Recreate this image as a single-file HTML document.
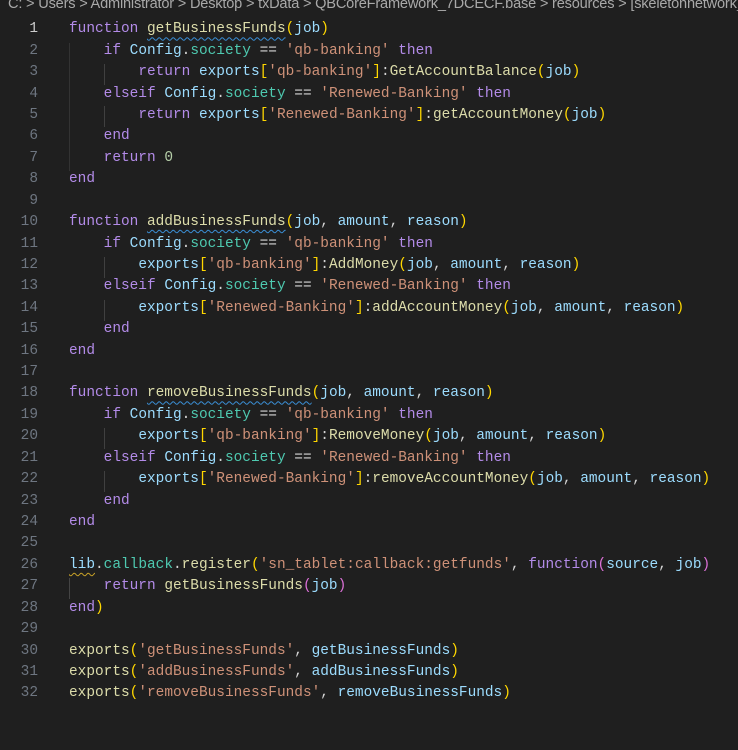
<!DOCTYPE html>
<html><head><meta charset="utf-8"><style>
html,body{margin:0;padding:0;background:#1f1f1f;width:738px;height:750px;overflow:hidden}
.bc{position:absolute;left:8px;top:-4px;font:14.6px "Liberation Sans",sans-serif;color:#a9a9a9;white-space:nowrap;letter-spacing:-0.2px}
.l{position:absolute;left:0;height:21.4px;line-height:21.4px;font:14.45px "Liberation Mono",monospace;white-space:pre;color:#d4d4d4}
.n{position:absolute;width:38px;text-align:right;color:#6e7681}
.n.a{color:#cccccc}
.c{position:absolute;left:69px}
.k{color:#b38be8}.f{color:#dcdcaa}.v{color:#9cdcfe}.p{color:#4ec9b0}.s{color:#ce9178}.num{color:#b5cea8}
.y{color:#ffd700}.m{color:#da70d6}.b{color:#179fff}
.w{text-decoration:underline wavy #3a8fd6;text-underline-offset:4px;text-decoration-thickness:1px}
.wy{text-decoration:underline wavy #c9a227;text-underline-offset:4px;text-decoration-thickness:1px}
.g{position:absolute;width:1px;background:#404040}
</style></head><body>
<div class="bc">C: &gt; Users &gt; Administrator &gt; Desktop &gt; txData &gt; QBCoreFramework_7DCECF.base &gt; resources &gt; [skeletonnetwork]</div>
<div class="g" style="left:104px;top:64px;height:21px"></div>
<div class="g" style="left:104px;top:106px;height:21px"></div>
<div class="g" style="left:104px;top:257px;height:21px"></div>
<div class="g" style="left:104px;top:300px;height:21px"></div>
<div class="g" style="left:104px;top:428px;height:21px"></div>
<div class="g" style="left:104px;top:471px;height:21px"></div>
<div class="g" style="left:69px;top:43px;height:128px;background:#333"></div>
<div class="g" style="left:69px;top:578px;height:21px;background:#444"></div>
<div id="code"></div>
<script>
const L=[
'<span class="k">function</span> <span class="f w">getBusinessFunds</span><span class="y">(</span><span class="v">job</span><span class="y">)</span>',
'    <span class="k">if</span> <span class="v">Config</span>.<span class="p">society</span> == <span class="s">\'qb-banking\'</span> <span class="k">then</span>',
'        <span class="k">return</span> <span class="v">exports</span><span class="y">[</span><span class="s">\'qb-banking\'</span><span class="y">]</span>:<span class="f">GetAccountBalance</span><span class="y">(</span><span class="v">job</span><span class="y">)</span>',
'    <span class="k">elseif</span> <span class="v">Config</span>.<span class="p">society</span> == <span class="s">\'Renewed-Banking\'</span> <span class="k">then</span>',
'        <span class="k">return</span> <span class="v">exports</span><span class="y">[</span><span class="s">\'Renewed-Banking\'</span><span class="y">]</span>:<span class="f">getAccountMoney</span><span class="y">(</span><span class="v">job</span><span class="y">)</span>',
'    <span class="k">end</span>',
'    <span class="k">return</span> <span class="num">0</span>',
'<span class="k">end</span>',
'',
'<span class="k">function</span> <span class="f w">addBusinessFunds</span><span class="y">(</span><span class="v">job</span>, <span class="v">amount</span>, <span class="v">reason</span><span class="y">)</span>',
'    <span class="k">if</span> <span class="v">Config</span>.<span class="p">society</span> == <span class="s">\'qb-banking\'</span> <span class="k">then</span>',
'        <span class="v">exports</span><span class="y">[</span><span class="s">\'qb-banking\'</span><span class="y">]</span>:<span class="f">AddMoney</span><span class="y">(</span><span class="v">job</span>, <span class="v">amount</span>, <span class="v">reason</span><span class="y">)</span>',
'    <span class="k">elseif</span> <span class="v">Config</span>.<span class="p">society</span> == <span class="s">\'Renewed-Banking\'</span> <span class="k">then</span>',
'        <span class="v">exports</span><span class="y">[</span><span class="s">\'Renewed-Banking\'</span><span class="y">]</span>:<span class="f">addAccountMoney</span><span class="y">(</span><span class="v">job</span>, <span class="v">amount</span>, <span class="v">reason</span><span class="y">)</span>',
'    <span class="k">end</span>',
'<span class="k">end</span>',
'',
'<span class="k">function</span> <span class="f w">removeBusinessFunds</span><span class="y">(</span><span class="v">job</span>, <span class="v">amount</span>, <span class="v">reason</span><span class="y">)</span>',
'    <span class="k">if</span> <span class="v">Config</span>.<span class="p">society</span> == <span class="s">\'qb-banking\'</span> <span class="k">then</span>',
'        <span class="v">exports</span><span class="y">[</span><span class="s">\'qb-banking\'</span><span class="y">]</span>:<span class="f">RemoveMoney</span><span class="y">(</span><span class="v">job</span>, <span class="v">amount</span>, <span class="v">reason</span><span class="y">)</span>',
'    <span class="k">elseif</span> <span class="v">Config</span>.<span class="p">society</span> == <span class="s">\'Renewed-Banking\'</span> <span class="k">then</span>',
'        <span class="v">exports</span><span class="y">[</span><span class="s">\'Renewed-Banking\'</span><span class="y">]</span>:<span class="f">removeAccountMoney</span><span class="y">(</span><span class="v">job</span>, <span class="v">amount</span>, <span class="v">reason</span><span class="y">)</span>',
'    <span class="k">end</span>',
'<span class="k">end</span>',
'',
'<span class="v wy">lib</span>.<span class="p">callback</span>.<span class="f">register</span><span class="y">(</span><span class="s">\'sn_tablet:callback:getfunds\'</span>, <span class="k">function</span><span class="m">(</span><span class="v">source</span>, <span class="v">job</span><span class="m">)</span>',
'    <span class="k">return</span> <span class="f">getBusinessFunds</span><span class="m">(</span><span class="v">job</span><span class="m">)</span>',
'<span class="k">end</span><span class="y">)</span>',
'',
'<span class="f">exports</span><span class="y">(</span><span class="s">\'getBusinessFunds\'</span>, <span class="v">getBusinessFunds</span><span class="y">)</span>',
'<span class="f">exports</span><span class="y">(</span><span class="s">\'addBusinessFunds\'</span>, <span class="v">addBusinessFunds</span><span class="y">)</span>',
'<span class="f">exports</span><span class="y">(</span><span class="s">\'removeBusinessFunds\'</span>, <span class="v">removeBusinessFunds</span><span class="y">)</span>'
];
let h='';
L.forEach((t,i)=>{const top=(21.3+i*21.42).toFixed(1);
h+=`<div class="l" style="top:${top}px"><span class="n${i==0?' a':''}">${i+1}</span><span class="c">${t}</span></div>`;});
document.getElementById('code').innerHTML=h;
</script>
</body></html>
